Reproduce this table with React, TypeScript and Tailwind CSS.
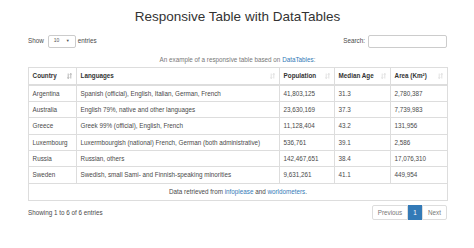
import React from "react";

const rows = [
  ["Argentina", "Spanish (official), English, Italian, German, French", "41,803,125", "31.3", "2,780,387"],
  ["Australia", "English 79%, native and other languages", "23,630,169", "37.3", "7,739,983"],
  ["Greece", "Greek 99% (official), English, French", "11,128,404", "43.2", "131,956"],
  ["Luxembourg", "Luxermbourgish (national) French, German (both administrative)", "536,761", "39.1", "2,586"],
  ["Russia", "Russian, others", "142,467,651", "38.4", "17,076,310"],
  ["Sweden", "Swedish, small Sami- and Finnish-speaking minorities", "9,631,261", "41.1", "449,954"],
];

function SortIcon({ active }: { active?: boolean }) {
  const c = active ? "#9a9a9a" : "#d6d6d6";
  return (
    <svg width="5" height="6" viewBox="0 0 5 6" className="shrink-0">
      <path d="M1.2 0.5V5.5M0.2 4.4L1.2 5.5L2.2 4.4" stroke={c} strokeWidth="0.7" fill="none" />
      <path d="M3.8 5.5V0.5M2.8 1.6L3.8 0.5L4.8 1.6" stroke={c} strokeWidth="0.7" fill="none" />
    </svg>
  );
}

const heads = [
  { label: "Country", w: "w-[48px]", active: true },
  { label: "Languages", w: "w-[203px]" },
  { label: "Population", w: "w-[55px]" },
  { label: "Median Age", w: "w-[56px]" },
  { label: "Area (Km²)", w: "w-[57px]" },
];

export default function App() {
  return (
    <div
      className="w-[474px] h-[248px] bg-white text-[#4a4a4a] text-[6.3px] overflow-hidden"
      style={{ fontFamily: '"Liberation Sans", Arial, sans-serif' }}
    >
      <div className="mx-[28px] w-[419px]">
        <h2 className="text-[13.5px] leading-none text-center pt-[10px] h-[34px] text-[#333]">
          Responsive Table with DataTables
        </h2>

        <div className="flex items-center justify-between h-[14px]">
          <div className="flex items-center">
            <span>Show</span>
            <div className="ml-[4px] w-[28px] h-[13px] border border-[#ccc] rounded-[2px] flex items-center justify-between px-[5px] text-[5px] text-[#555]">
              <span>10</span>
              <span className="text-[4px]">▼</span>
            </div>
            <span className="ml-[2px]">entries</span>
          </div>
          <div className="flex items-center">
            <span>Search:</span>
            <div className="ml-[3px] w-[79px] h-[13px] border border-[#ccc] rounded-[2px]" />
          </div>
        </div>

        <div className="text-center text-[#777] h-[19px] pt-[9px] leading-none">
          An example of a responsive table based on <span className="text-[#337ab7]">DataTables</span>:
        </div>

        <table className="w-[419px] table-fixed border-collapse border border-[#ddd]">
          <thead>
            <tr className="h-[17.4px]">
              {heads.map((h) => (
                <th
                  key={h.label}
                  className={`${h.w} border border-[#ddd] border-b-2 text-left font-bold text-[#333] px-[3.6px] p-0`}
                >
                  <div className="flex items-center justify-between">
                    <span>{h.label}</span>
                    <SortIcon active={h.active} />
                  </div>
                </th>
              ))}
            </tr>
          </thead>
          <tbody>
            {rows.map((r) => (
              <tr key={r[0]} className="h-[16.4px]">
                {r.map((c, i) => (
                  <td key={i} className="border border-[#ddd] px-[3.6px] py-0 whitespace-nowrap overflow-hidden">
                    {c}
                  </td>
                ))}
              </tr>
            ))}
          </tbody>
          <tfoot>
            <tr className="h-[17px]">
              <td colSpan={5} className="text-center border border-[#ddd] px-[3.6px]">
                Data retrieved from <span className="text-[#337ab7]">infoplease</span> and{" "}
                <span className="text-[#337ab7]">worldometers</span>.
              </td>
            </tr>
          </tfoot>
        </table>

        <div className="flex items-center justify-between mt-[4px]">
          <span>Showing 1 to 6 of 6 entries</span>
          <div className="flex h-[15px]">
            <div className="w-[36px] border border-[#ddd] rounded-l-[2px] flex items-center justify-center text-[#777]">
              Previous
            </div>
            <div className="w-[14px] bg-[#337ab7] border border-[#337ab7] text-white flex items-center justify-center">
              1
            </div>
            <div className="w-[25px] border border-[#ddd] rounded-r-[2px] flex items-center justify-center text-[#777]">
              Next
            </div>
          </div>
        </div>
      </div>
    </div>
  );
}
